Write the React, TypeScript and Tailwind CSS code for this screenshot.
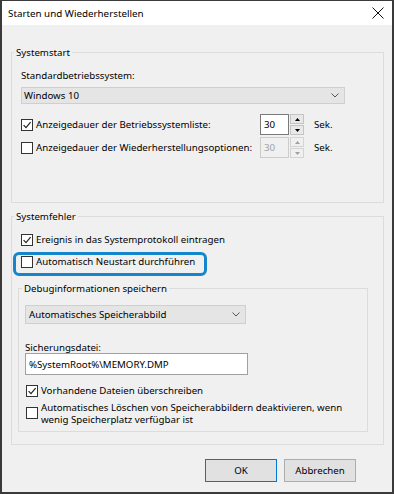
import React from "react";

function Check({ checked }: { checked?: boolean }) {
  return (
    <span className="w-[12px] h-[12px] border border-[#333333] bg-white flex items-center justify-center shrink-0">
      {checked && (
        <svg width="10" height="10" viewBox="0 0 10 10">
          <path d="M1.6 5.2 L4 7.6 L8.6 2.2" fill="none" stroke="#222222" strokeWidth="1.2" />
        </svg>
      )}
    </span>
  );
}

function Chevron() {
  return (
    <svg width="8" height="5" viewBox="0 0 8 5">
      <path d="M0.5 0.5 L4 4 L7.5 0.5" fill="none" stroke="#555555" strokeWidth="1" />
    </svg>
  );
}

function Spinner({ disabled }: { disabled?: boolean }) {
  return (
    <div className="flex items-center">
      <div
        className={
          disabled
            ? "w-[29px] h-[21px] border border-[#cccccc] bg-[#f0f0f0] text-[#a0a0a0] pl-[3px] flex items-center"
            : "w-[29px] h-[21px] border border-[#7a7a7a] bg-white pl-[3px] flex items-center"
        }
      >
        30
      </div>
      <div className="flex flex-col gap-[1px] ml-[1px]">
        <div
          className={
            disabled
              ? "w-[14px] h-[10px] border border-[#d4d4d4] bg-[#f0f0f0] flex items-center justify-center"
              : "w-[14px] h-[10px] border border-[#c4c4c4] bg-[#e8e8e8] flex items-center justify-center"
          }
        >
          <svg width="5" height="3" viewBox="0 0 5 3">
            <path d="M0 3 L2.5 0 L5 3 Z" fill={disabled ? "#a0a0a0" : "#000000"} />
          </svg>
        </div>
        <div
          className={
            disabled
              ? "w-[14px] h-[10px] border border-[#d4d4d4] bg-[#f0f0f0] flex items-center justify-center"
              : "w-[14px] h-[10px] border border-[#c4c4c4] bg-[#e8e8e8] flex items-center justify-center"
          }
        >
          <svg width="5" height="3" viewBox="0 0 5 3">
            <path d="M0 0 L2.5 3 L5 0 Z" fill={disabled ? "#a0a0a0" : "#000000"} />
          </svg>
        </div>
      </div>
      <span className="ml-[10px]">Sek.</span>
    </div>
  );
}

export default function App() {
  return (
    <div className="w-[394px] h-[494px] border-x-2 border-b-2 border-t border-[#3a3a3a] bg-[#f0f0f0] flex flex-col text-[9.7px] leading-[13px] text-black whitespace-nowrap [font-family:'Noto_Sans',sans-serif]">
      {/* Title bar */}
      <div className="h-[24px] bg-white flex items-center justify-between pl-[6px] pr-[8px] shrink-0">
        <span className="text-[9.8px]">Starten und Wiederherstellen</span>
        <svg width="12" height="12" viewBox="0 0 12 12">
          <path d="M0.5 0.5 L11.5 11.5 M11.5 0.5 L0.5 11.5" stroke="#111111" strokeWidth="1" />
        </svg>
      </div>

      {/* Body */}
      <div className="flex flex-col pt-[21px] pl-[9px] pr-[8px]">
        {/* Systemstart */}
        <fieldset className="border border-[#dcdcdc] p-0 m-0">
          <legend className="ml-[2px] px-[2px]">Systemstart</legend>
          <div className="pl-[9px] pt-[10px] pb-[44px] flex flex-col">
            <div>Standardbetriebssystem:</div>
            <div className="mt-[5px] w-[324px] h-[17px] bg-[#e5e5e5] border border-[#cfcfcf] flex items-center justify-between pl-[2px] pr-[5px]">
              <span>Windows 10</span>
              <Chevron />
            </div>
            <div className="mt-[10px] flex items-center">
              <div className="w-[239px] flex items-center gap-[3px]">
                <Check checked />
                <span>Anzeigedauer der Betriebssystemliste:</span>
              </div>
              <Spinner />
            </div>
            <div className="mt-[2px] flex items-center">
              <div className="w-[239px] flex items-center gap-[3px]">
                <Check />
                <span>Anzeigedauer der Wiederherstellungsoptionen:</span>
              </div>
              <Spinner disabled />
            </div>
          </div>
        </fieldset>

        {/* Systemfehler */}
        <fieldset className="border border-[#dcdcdc] p-0 m-0 mt-[7px]">
          <legend className="ml-[2px] px-[2px]">Systemfehler</legend>
          <div className="pl-[6px] pr-[15px] pt-[10px] pb-[12px] flex flex-col">
            <div className="ml-[3px] flex items-center gap-[3px]">
              <Check checked />
              <span>Ereignis in das Systemprotokoll eintragen</span>
            </div>
            <div className="relative mt-[9px] ml-[3px] flex items-center gap-[3px]">
              <Check />
              <span>Automatisch Neustart durchführen</span>
              <div className="absolute left-[-8px] top-[-3px] w-[194px] h-[24px] border-[3px] border-[#1686cc] rounded-[6px]" />
            </div>

            {/* Debug subgroup */}
            <fieldset className="border border-[#dcdcdc] p-0 m-0 mt-[14px]">
              <legend className="ml-[3px] px-[2px]">Debuginformationen speichern</legend>
              <div className="pl-[6px] pt-[10px] pb-[5px] flex flex-col">
                <div className="w-[221px] h-[19px] bg-[#e5e5e5] border border-[#cfcfcf] flex items-center justify-between pl-[3px] pr-[5px]">
                  <span>Automatisches Speicherabbild</span>
                  <Chevron />
                </div>
                <div className="mt-[19px] leading-[10px]">Sicherungsdatei:</div>
                <div className="w-[223px] h-[22px] bg-white border border-[#a0a0a0] flex items-center pl-[3px]">
                  %SystemRoot%\MEMORY.DMP
                </div>
                <div className="mt-[9px] ml-[1px] flex items-center gap-[3px]">
                  <Check checked />
                  <span>Vorhandene Dateien überschreiben</span>
                </div>
                <div className="mt-[5px] ml-[1px] flex items-start gap-[3px]">
                  <div className="mt-[5px]">
                    <Check />
                  </div>
                  <span className="leading-[12px]">
                    Automatisches Löschen von Speicherabbildern deaktivieren, wenn
                    <br />
                    wenig Speicherplatz verfügbar ist
                  </span>
                </div>
              </div>
            </fieldset>
          </div>
        </fieldset>

        {/* Buttons */}
        <div className="mt-[14px] flex justify-end gap-[7px] pr-[28px]">
          <button className="w-[72px] h-[23px] bg-[#e1e1e1] border border-[#0078d7] flex items-center justify-center">
            OK
          </button>
          <button className="w-[72px] h-[23px] bg-[#e1e1e1] border border-[#adadad] flex items-center justify-center">
            Abbrechen
          </button>
        </div>
      </div>
    </div>
  );
}
